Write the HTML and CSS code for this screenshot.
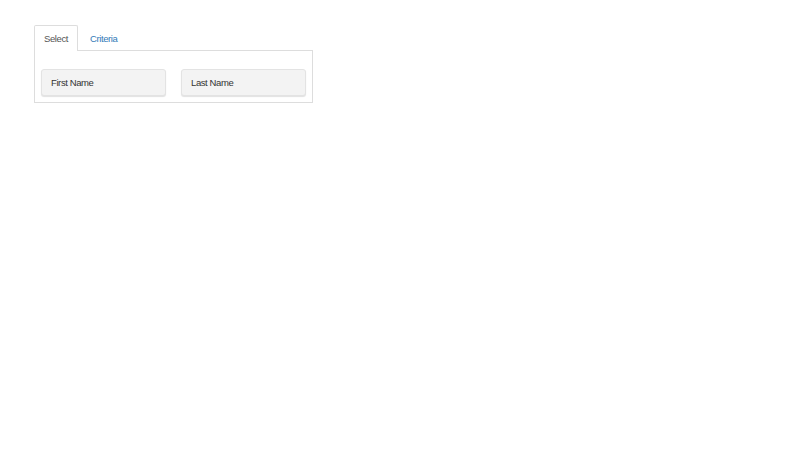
FILE: index.html
```html
<!DOCTYPE html>
<html>
<head>
<meta charset="utf-8">
<link rel="stylesheet" href="styles.css">
</head>
<body>
<div class="wrap">
  <ul class="tabs">
    <li class="tab active">Select</li>
    <li class="tab">Criteria</li>
  </ul>
  <div class="panel">
    <div class="card">First Name</div>
    <div class="card">Last Name</div>
  </div>
</div>
</body>
</html>
```
FILE: styles.css
```css
html, body {
  margin: 0;
  padding: 0;
  background: #fff;
}
body {
  font-family: "Liberation Sans", Arial, sans-serif;
  font-size: 9.5px;
  color: #333;
}
.wrap {
  padding: 25px 0 0 34px;
}
.tabs {
  list-style: none;
  margin: 0;
  padding: 0;
  display: flex;
  position: relative;
  z-index: 1;
}
.tab {
  box-sizing: border-box;
  height: 26px;
  line-height: 25px;
  padding: 0 9px;
  margin-right: 2px;
  border: 1px solid transparent;
  border-bottom: none;
  color: #337ab7;
  font-size: 9.5px;
  letter-spacing: -0.4px;
}
.tab.active {
  color: #555;
  background: #fff;
  border-color: #ddd;
  border-radius: 2px 2px 0 0;
}
.panel {
  box-sizing: border-box;
  width: 279px;
  height: 53px;
  margin-top: -1px;
  border: 1px solid #ddd;
  padding: 18px 6px 6px 6px;
  display: flex;
  gap: 15px;
}
.card {
  box-sizing: border-box;
  width: 125px;
  height: 27px;
  line-height: 25px;
  padding: 0 9px;
  background: #f3f3f3;
  border: 1px solid #e3e3e3;
  border-radius: 3px;
  box-shadow: 0 1px 1px rgba(0,0,0,0.12);
  color: #333;
  font-size: 9.5px;
  letter-spacing: -0.4px;
}
```
